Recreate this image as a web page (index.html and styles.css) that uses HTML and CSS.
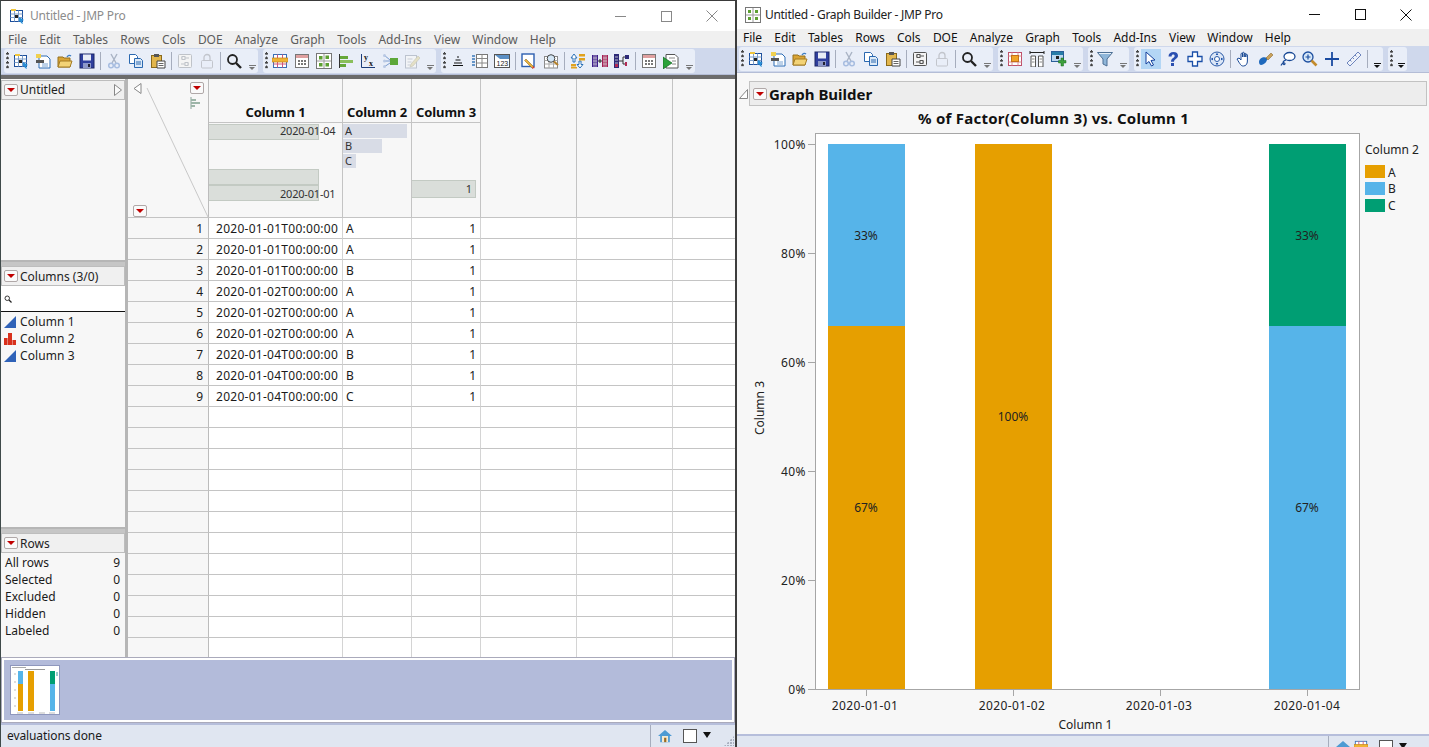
FILE: index.html
```html
<!DOCTYPE html>
<html lang="en">
<head>
<meta charset="utf-8">
<title>JMP Pro</title>
<link rel="stylesheet" href="styles.css">
</head>
<body>
<svg class="defs" width="0" height="0" aria-hidden="true">
  <symbol id="newtable" viewBox="0 0 16 16"><rect x="1.500" y="2.500" width="12" height="11" fill="#fff" stroke="#1c4f9c"/><path d="M1.500 6h12M1.500 9.500h12M5.500 2.500v11M9.500 2.500v11" stroke="#7f9fc9"/><path d="M2 1h5v2H2z" fill="#f0c63c"/><rect x="6" y="7" width="3" height="3" fill="#222"/><path d="M10 9l5 3-2 1 1 3-2-1-1-2-1 1z" fill="#2a8fd6"/></symbol>
  <symbol id="newscript" viewBox="0 0 16 16"><path d="M4 3h8l3 3v9H4z" fill="#fff" stroke="#2c6db5"/><path d="M1 1h5v4H1z" fill="#f0d050"/><path d="M1 7h8v3H1z" fill="#555"/><path d="M7 11h6M7 13h6" stroke="#7aa3d2"/></symbol>
  <symbol id="open" viewBox="0 0 16 16"><path d="M1 4h5l1 1h6v9H1z" fill="#d9a436" stroke="#95701f"/><path d="M3 8h12l-2 6H1z" fill="#f3d377" stroke="#a47d27"/><path d="M10 4c1-2 3-2 4-1" fill="none" stroke="#3d7ec4" stroke-width="1.300"/></symbol>
  <symbol id="save" viewBox="0 0 16 16"><rect x="1" y="1" width="14" height="14" fill="#2f3f9e" stroke="#1d2766"/><rect x="4" y="1.500" width="8" height="6" fill="#e8ecf5"/><rect x="4" y="10" width="8" height="5" fill="#8d98c9"/><rect x="9" y="11" width="2" height="3" fill="#223"/></symbol>
  <symbol id="cut" viewBox="0 0 16 16"><path d="M5 1l5 9M11 1L6 10" stroke="#a9b3c4" stroke-width="1.400"/><circle cx="5" cy="12.500" r="2.300" fill="none" stroke="#a7bde0" stroke-width="1.500"/><circle cx="11" cy="12.500" r="2.300" fill="none" stroke="#a7bde0" stroke-width="1.500"/></symbol>
  <symbol id="copy" viewBox="0 0 16 16"><path d="M1.500 1.500h6l2 2v7h-8z" fill="#fff" stroke="#2a68b0"/><path d="M6.500 5.500h6l2 2v7h-8z" fill="#dce9f7" stroke="#2a68b0"/><path d="M8 9h5M8 11h5" stroke="#2a68b0"/></symbol>
  <symbol id="paste" viewBox="0 0 16 16"><rect x="1.500" y="2.500" width="10" height="12" fill="#e2b64d" stroke="#8a6a1c"/><rect x="4" y="1" width="5" height="3" fill="#555"/><path d="M7 8h8v7H7z" fill="#fff" stroke="#444"/><path d="M8.500 10.500h5M8.500 12.500h5" stroke="#666"/></symbol>
  <symbol id="sliders" viewBox="0 0 16 16"><rect x="1.500" y="1.500" width="13" height="13" rx="1" fill="#f4f4f4" stroke="currentColor"/><path d="M4 5h8M4 11h8" stroke="currentColor"/><rect x="5" y="3.500" width="3" height="3" fill="#f4f4f4" stroke="currentColor"/><rect x="8" y="9.500" width="3" height="3" fill="#f4f4f4" stroke="currentColor"/></symbol>
  <symbol id="lock" viewBox="0 0 16 16"><rect x="2.500" y="7.500" width="11" height="7.500" rx="1" fill="none" stroke="#c2c5cc"/><path d="M5 7.500V4.500a3 3 0 016 0v3" fill="none" stroke="#c2c5cc" stroke-width="1.300"/></symbol>
  <symbol id="search" viewBox="0 0 16 16"><circle cx="6.500" cy="6.500" r="4.500" fill="none" stroke="#222" stroke-width="1.800"/><path d="M10 10l5 5" stroke="#222" stroke-width="2.400"/></symbol>
  <symbol id="colorgrid" viewBox="0 0 16 16"><rect x="1.500" y="1.500" width="13" height="13" fill="#fff" stroke="#3a6fb5"/><path d="M1.500 11h13M5.500 1.500v13M10.500 1.500v13" stroke="#d0567a"/><rect x="0" y="5" width="16" height="4" fill="#f0b432" stroke="#c4811a" stroke-width=".7"/></symbol>
  <symbol id="calc" viewBox="0 0 16 16"><rect x="1.500" y="1.500" width="13" height="13" fill="#fff" stroke="#777"/><rect x="2" y="2" width="12" height="3" fill="#dfa0a0"/><path d="M4 7h2v2H4zM7 7h2v2H7zM10 7h2v2h-2zM4 10h2v2H4zM7 10h2v2H7zM10 10h2v2h-2z" fill="#777"/></symbol>
  <symbol id="quad" viewBox="0 0 16 16"><rect x=".5" y=".5" width="15" height="15" fill="#fff" stroke="#777"/><path d="M8 1v14M1 8h14" stroke="#999"/><path d="M3 3h3.500v3.500H3zM9.500 2.500h3.500V6H9.500zM3 10h3.500v3.500H3zM9.500 10H13v3.500H9.500z" fill="#5da032"/></symbol>
  <symbol id="hbars" viewBox="0 0 16 16"><path d="M1.500 1v14" stroke="#333"/><path d="M2 3h8v3H2z" fill="#66a83a"/><path d="M2 7h13v3H2z" fill="#8abf5c"/><path d="M2 11h6v3H2z" fill="#66a83a"/></symbol>
  <symbol id="nodes" viewBox="0 0 16 16"><rect x="8" y="5" width="8" height="7" fill="#5da83a"/><path d="M2 2l6 5M2 8h6M2 14l6-4" stroke="#7a9ccf"/><circle cx="2.500" cy="2.500" r="1.500" fill="#b9c9e4"/><circle cx="2.500" cy="8" r="1.500" fill="#b9c9e4"/><circle cx="2.500" cy="13.500" r="1.500" fill="#b9c9e4"/></symbol>
  <symbol id="note" viewBox="0 0 16 16"><rect x="1.500" y="2.500" width="11" height="12.500" fill="#f2f4f7" stroke="#bcc3cf"/><path d="M3.500 6h5M3.500 9h4M3.500 12h3" stroke="#c8cdd6"/><path d="M7 11l7-8 2 2-7 8-3 1z" fill="#e4e0c6" stroke="#c5c5b5" stroke-width=".6"/></symbol>
  <symbol id="pyramid" viewBox="0 0 16 16"><path d="M7 4h2M5.500 7h5M4 10h8M3 12.500h10" stroke="#111"/></symbol>
  <symbol id="dashgrid" viewBox="0 0 16 16"><rect x="4.500" y="1.500" width="11" height="13" fill="#fff" stroke="#777"/><path d="M4.500 5.500h11M4.500 10h11M10 1.500v13" stroke="#888"/><path d="M0 3h3M0 6h3M0 9h3M0 12h3" stroke="#3a78b8" stroke-width="1.400"/></symbol>
  <symbol id="pencilbox" viewBox="0 0 16 16"><rect x="1" y="1" width="12" height="12.500" fill="#fff" stroke="#2c5fb0" stroke-width="1.400"/><path d="M5 6l8 8-1.500 1.500-8-8z" fill="#e8b23c" stroke="#7a5a1c" stroke-width=".5"/><path d="M12 13l2 2-3 .5z" fill="#d63a3a"/></symbol>
  <symbol id="tablemag" viewBox="0 0 16 16"><rect x="1.500" y="3.500" width="13" height="11.500" fill="#fff" stroke="#888"/><path d="M1.500 7.500h13M1.500 11h13M6 3.500V15M10.500 3.500V15" stroke="#a8a8a8"/><circle cx="8" cy="5.500" r="3.800" fill="#d3e6f6" stroke="#444"/><path d="M11 8.500l4 3.500" stroke="#b5812a" stroke-width="2"/></symbol>
  <symbol id="sort" viewBox="0 0 16 16"><path d="M4 1L1 5h2v4h2V5h2z" fill="#fff" stroke="#2c72b8"/><path d="M11 15l3-3.500h-2V8h-2v3.500H8z" fill="#fff" stroke="#2c72b8" transform="translate(-1 0)"/><path d="M9 1h6v2.500H9zM9 5h6v2.500H9z" fill="#e0a21f"/><path d="M1 11h5v2.500H1zM1 14h6v1.500H1z" fill="#e0a21f"/></symbol>
  <symbol id="joincols" viewBox="0 0 16 16"><path d="M0 2h6v12H0z" fill="#3e1f8c"/><path d="M10 2h6v12h-6z" fill="#a51e55"/><path d="M1 5h4M1 8h4M1 11h4M11 5h4M11 8h4M11 11h4M2 2v12M4 2v12M12 2v12M14 2v12" stroke="#ddd" stroke-width=".7"/><path d="M6 8h4M8 6v4" stroke="#222"/></symbol>
  <symbol id="tree" viewBox="0 0 16 16"><path d="M0 1h5v14H0z" fill="#2d2a78"/><path d="M1 4h3M1 7h3M1 10h3M1 13h3" stroke="#e0e0e0" stroke-width=".8"/><path d="M1 11h3v3H1z" fill="#b22a55"/><path d="M5 8h4M9 4v7M9 4h2M9 11h2" stroke="#333" fill="none"/><path d="M11 2h4v4h-4z" fill="#2d2a78"/><path d="M11 9h2v4h-2z" fill="#b22a55"/></symbol>
  <symbol id="play" viewBox="0 0 16 16"><path d="M3 1.500h9l3 3V15H3z" fill="#fff" stroke="#555"/><path d="M6 5h6M9 8h4M9 11h4" stroke="#888"/><path d="M0 4l9 6-9 6z" fill="#2aa23a" stroke="#116622" stroke-width=".7"/></symbol>
  <symbol id="chartgrid" viewBox="0 0 16 16"><rect x="1.500" y="1.500" width="13" height="13" fill="#fff" stroke="#c0506a"/><path d="M5 1.500v13M11 1.500v13M1.500 5h13M1.500 11h13" stroke="#d89090"/><rect x="4.500" y="4.500" width="7" height="6" fill="#f0a428" stroke="#c4711a"/></symbol>
  <symbol id="columnsw" viewBox="0 0 16 16"><path d="M1 1.500h14M1 0v3M15 0v3" stroke="#222"/><path d="M2 5h4.500v11H2zM9.500 5H14v11H9.500z" fill="#fff" stroke="#555"/><path d="M3 8h2.500M3 11h2.500M10.500 8H13M10.500 11H13" stroke="#888"/></symbol>
  <symbol id="addtable" viewBox="0 0 16 16"><rect x=".5" y=".5" width="12" height="10" fill="#bcd6ee" stroke="#2b5f99"/><path d="M1 1h11v3H1z" fill="#277da8"/><rect x="5" y="5" width="3" height="3" fill="#222"/><path d="M10 7h2.500v2.500H15V12h-2.500v3H10v-3H7.500V9.500H10z" fill="#3da03c" stroke="#1b6a1f" stroke-width=".5"/></symbol>
  <symbol id="funnel" viewBox="0 0 16 16"><path d="M.500 1.500h15L10 8v7l-4-2V8z" fill="#8fb6d9" stroke="#4d6f94"/><path d="M2 2.500h12" stroke="#e5eef7"/></symbol>
  <symbol id="arrow" viewBox="0 0 16 16"><path d="M3 1v12l3-2.500 2.500 4.500 2-1-2.500-4.500 4-.5z" fill="#fff" stroke="#123f9c"/></symbol>
  <symbol id="help" viewBox="0 0 16 16"><path d="M3.500 5.500C3.500 2.500 5.500 1 8.500 1s4.500 1.700 4.500 3.800c0 3-4 3.200-4 6h-3c0-3.800 3.600-3.800 3.600-5.800 0-2-3-2-3 .5z" fill="#2a4fb0"/><rect x="6" y="12" width="3" height="3" fill="#2a4fb0"/></symbol>
  <symbol id="pad" viewBox="0 0 16 16"><path d="M5.500 1h5v4.500H15v5h-4.500V15h-5v-4.500H1v-5h4.500z" fill="#fff" stroke="#1a4fa8" stroke-width="1.300"/></symbol>
  <symbol id="target" viewBox="0 0 16 16"><circle cx="8" cy="8" r="7" fill="#dbe6f6" stroke="#2b5ba8"/><circle cx="8" cy="8" r="2.500" fill="#fff" stroke="#2b5ba8"/><path d="M8 1.500L6.800 4h2.400zM8 14.500L6.800 12h2.400zM1.500 8L4 6.800v2.400zM14.500 8L12 6.800v2.400z" fill="#1a4fa8"/></symbol>
  <symbol id="hand" viewBox="0 0 16 16"><path d="M1 8l2-1 2 2V3c0-1 1.500-1 1.500 0v3-4c0-1 1.700-1 1.700 0v4-3c0-1 1.600-1 1.600 0v3-2c0-1 1.600-1 1.600 0v6c0 3-1.500 5-4 5H7C5 15 4 13 1 8z" fill="#fff" stroke="#1a4a96"/></symbol>
  <symbol id="brush" viewBox="0 0 16 16"><path d="M1 11c0-4 5-6 8-4 1 3-3 7-6 7-1 0-2-1-2-3z" fill="#1f69bd"/><path d="M8 7l5-5 2 2-5 5z" fill="#caa15a" stroke="#7d5a1e" stroke-width=".5"/></symbol>
  <symbol id="lasso" viewBox="0 0 16 16"><ellipse cx="9.500" cy="5.500" rx="5.500" ry="4" fill="#fff" stroke="#1a4a96" stroke-width="1.300"/><path d="M6 9c-2 .5-3 2-3 3 0 2 2 2 2 .5 0-1-3-1-4 2" fill="none" stroke="#1a4a96" stroke-width="1.200"/></symbol>
  <symbol id="zoom" viewBox="0 0 16 16"><circle cx="6" cy="6" r="5" fill="#d6e7f8" stroke="#1d4fa0" stroke-width="1.300"/><path d="M3.500 6h5M6 3.500v5" stroke="#1d4fa0" stroke-width="1.200"/><path d="M9.500 9.500l5 5" stroke="#c28a2c" stroke-width="2.600"/></symbol>
  <symbol id="cross" viewBox="0 0 16 16"><path d="M8 1v14M1 8h14" stroke="#1a4aa0" stroke-width="1.800"/></symbol>
  <symbol id="ruler" viewBox="0 0 16 16"><path d="M1 12L12 1l3 3L4 15z" fill="#eef2fa" stroke="#6d84bd"/><path d="M4 9l1.500 1.500M6.500 6.500L8 8M9 4l1.500 1.500" stroke="#6d84bd"/></symbol>
  <symbol id="home" viewBox="0 0 16 16"><path d="M8 1L0 8h2.500v7H13.500V8H16z" fill="#4d9bd3"/><path d="M4.500 8h7v7h-7z" fill="#f4ead0"/><rect x="7" y="10" width="2.500" height="5" fill="#9a6a22"/></symbol>
  <symbol id="winicon" viewBox="0 0 16 16"><rect x=".5" y=".5" width="15" height="15" fill="#fff" stroke="#777"/><path d="M8 1v14M1 8h14" stroke="#999"/><path d="M3 3h3v3H3zM10 3h3v3h-3zM3 10h3v3H3zM10 10h3v3h-3z" fill="#5da032"/></symbol>
</svg>

<div class="desktop">
  <section class="window window-left">
    <header class="titlebar">
      <svg class="app-icon"><use href="#newtable"/></svg>
      <span class="title-text">Untitled - JMP Pro</span>
      <div class="win-controls">
        <span class="wc wc-min"></span><span class="wc wc-max"></span>
        <svg class="wc-close" viewBox="0 0 12 12"><path d="M.5.500l11 11M11.500.500l-11 11" stroke="currentColor"/></svg>
      </div>
    </header>
    <nav class="menubar">
      <span>File</span><span>Edit</span><span>Tables</span><span>Rows</span><span>Cols</span><span>DOE</span><span>Analyze</span><span>Graph</span><span>Tools</span><span>Add-Ins</span><span>View</span><span>Window</span><span>Help</span>
    </nav>
    <div class="toolbar">
      <div class="tgroup">
        <i class="grip"></i>
        <svg class="ti"><use href="#newtable"/></svg><svg class="ti"><use href="#newscript"/></svg><svg class="ti"><use href="#open"/></svg><svg class="ti"><use href="#save"/></svg><i class="sep"></i>
        <svg class="ti"><use href="#cut"/></svg><svg class="ti"><use href="#copy"/></svg><svg class="ti"><use href="#paste"/></svg><i class="sep"></i>
        <svg class="ti dim"><use href="#sliders"/></svg><svg class="ti"><use href="#lock"/></svg><i class="sep"></i>
        <svg class="ti"><use href="#search"/></svg><i class="chev"></i>
      </div>
      <div class="tgroup">
        <i class="grip"></i>
        <svg class="ti"><use href="#colorgrid"/></svg><svg class="ti"><use href="#calc"/></svg><svg class="ti"><use href="#quad"/></svg><svg class="ti"><use href="#hbars"/></svg>
        <svg class="ti" viewBox="0 0 16 16"><path d="M1.500 1v13.500H15" fill="none" stroke="#1c3d7a"/><text class="ti-y" x="4" y="7">y</text><text class="ti-y" x="9" y="13">x</text></svg>
        <svg class="ti"><use href="#nodes"/></svg><svg class="ti"><use href="#note"/></svg><i class="chev"></i>
      </div>
      <div class="tgroup">
        <i class="grip"></i>
        <svg class="ti"><use href="#pyramid"/></svg><svg class="ti"><use href="#dashgrid"/></svg>
        <svg class="ti" viewBox="0 0 16 16"><rect x=".5" y="1.500" width="15" height="13" fill="#fff" stroke="#555"/><path d="M1 2h14v4H6z" fill="#5c8fc4"/><text class="ti-n" x="2.500" y="13">123</text></svg><i class="sep"></i>
        <svg class="ti"><use href="#pencilbox"/></svg><svg class="ti"><use href="#tablemag"/></svg><i class="sep"></i>
        <svg class="ti"><use href="#sort"/></svg><svg class="ti"><use href="#joincols"/></svg><svg class="ti"><use href="#tree"/></svg><i class="sep"></i>
        <svg class="ti"><use href="#calc"/></svg><svg class="ti"><use href="#play"/></svg><i class="chev"></i>
      </div>
    </div>
    <div class="darkbar"></div>

    <div class="workspace">
      <aside class="sidebar">
        <div class="panel panel-untitled">
          <div class="panel-head"><span class="redbtn"></span><span class="panel-name">Untitled</span><svg class="panel-tri" viewBox="0 0 8 12"><path d="M.5.500l7 5.500-7 5.500z" fill="#fafafa" stroke="#888"/></svg></div>
        </div>
        <div class="splitter"></div>
        <div class="panel panel-columns">
          <div class="panel-head"><span class="redbtn"></span><span class="panel-name">Columns (3/0)</span></div>
          <div class="col-search"><svg class="mini-search"><use href="#search"/></svg></div>
          <ul class="col-list">
            <li><svg class="col-ico" viewBox="0 0 12 12"><path d="M0 12L12 0v12z" fill="#2f62b8"/></svg>Column 1</li>
            <li><svg class="col-ico" viewBox="0 0 12 12"><path d="M0 5h3.600v7H0zM4 0h4v12H4zM8.400 7H12v5H8.400z" fill="#d8301c"/></svg>Column 2</li>
            <li><svg class="col-ico" viewBox="0 0 12 12"><path d="M0 12L12 0v12z" fill="#2f62b8"/></svg>Column 3</li>
          </ul>
        </div>
        <div class="splitter"></div>
        <div class="panel panel-rows">
          <div class="panel-head"><span class="redbtn"></span><span class="panel-name">Rows</span></div>
          <dl class="row-stats">
            <div><dt>All rows</dt><dd>9</dd></div>
            <div><dt>Selected</dt><dd>0</dd></div>
            <div><dt>Excluded</dt><dd>0</dd></div>
            <div><dt>Hidden</dt><dd>0</dd></div>
            <div><dt>Labeled</dt><dd>0</dd></div>
          </dl>
        </div>
      </aside>

      <div class="sheet">
        <div class="sheet-head">
          <div class="corner">
            <svg class="corner-lines" viewBox="0 0 81 138"><path d="M19 9l61 129" stroke="#c8c8c8" fill="none"/><path d="M13 4.500L6 9.500l7 5z" fill="#fff" stroke="#888"/></svg>
            <span class="redbtn corner-top"></span>
            <svg class="corner-list" viewBox="0 0 11 12"><path d="M1 0v12" stroke="#8aa39a"/><path d="M1 2h5v2H1zM1 5h9v2H1zM1 8h4v2H1z" fill="#9db5a8"/></svg>
            <span class="redbtn corner-bottom"></span>
          </div>
          <div class="hcol">
            <div class="hname">Column 1</div>
            <div class="hist hist-date">
              <div class="hbar-row first"><i class="hbar"></i><span>2020-01-04</span></div>
              <div class="hbar-gap"></div>
              <div class="hbar-row"><i class="hbar"></i></div>
              <div class="hbar-row"><i class="hbar"></i><span>2020-01-01</span></div>
            </div>
          </div>
          <div class="hcol">
            <div class="hname">Column 2</div>
            <div class="hist hist-cat">
              <div class="cat-row"><i class="cbar cbar-a"></i><span>A</span></div>
              <div class="cat-row"><i class="cbar cbar-b"></i><span>B</span></div>
              <div class="cat-row"><i class="cbar cbar-c"></i><span>C</span></div>
            </div>
          </div>
          <div class="hcol">
            <div class="hname">Column 3</div>
            <div class="hist hist-num"><div class="num-bar">1</div></div>
          </div>
          <div class="hcol"></div>
          <div class="hcol"></div>
          <div class="hcol hcol-last"></div>
        </div>
        <div class="rows">
          <div class="row"><b>1</b><i>2020-01-01T00:00:00</i><i>A</i><i class="n">1</i><i></i><i></i><i></i></div>
          <div class="row"><b>2</b><i>2020-01-01T00:00:00</i><i>A</i><i class="n">1</i><i></i><i></i><i></i></div>
          <div class="row"><b>3</b><i>2020-01-01T00:00:00</i><i>B</i><i class="n">1</i><i></i><i></i><i></i></div>
          <div class="row"><b>4</b><i>2020-01-02T00:00:00</i><i>A</i><i class="n">1</i><i></i><i></i><i></i></div>
          <div class="row"><b>5</b><i>2020-01-02T00:00:00</i><i>A</i><i class="n">1</i><i></i><i></i><i></i></div>
          <div class="row"><b>6</b><i>2020-01-02T00:00:00</i><i>A</i><i class="n">1</i><i></i><i></i><i></i></div>
          <div class="row"><b>7</b><i>2020-01-04T00:00:00</i><i>B</i><i class="n">1</i><i></i><i></i><i></i></div>
          <div class="row"><b>8</b><i>2020-01-04T00:00:00</i><i>B</i><i class="n">1</i><i></i><i></i><i></i></div>
          <div class="row"><b>9</b><i>2020-01-04T00:00:00</i><i>C</i><i class="n">1</i><i></i><i></i><i></i></div>
          <div class="row"><b></b><i></i><i></i><i></i><i></i><i></i><i></i></div>
          <div class="row"><b></b><i></i><i></i><i></i><i></i><i></i><i></i></div>
          <div class="row"><b></b><i></i><i></i><i></i><i></i><i></i><i></i></div>
          <div class="row"><b></b><i></i><i></i><i></i><i></i><i></i><i></i></div>
          <div class="row"><b></b><i></i><i></i><i></i><i></i><i></i><i></i></div>
          <div class="row"><b></b><i></i><i></i><i></i><i></i><i></i><i></i></div>
          <div class="row"><b></b><i></i><i></i><i></i><i></i><i></i><i></i></div>
          <div class="row"><b></b><i></i><i></i><i></i><i></i><i></i><i></i></div>
          <div class="row"><b></b><i></i><i></i><i></i><i></i><i></i><i></i></div>
          <div class="row"><b></b><i></i><i></i><i></i><i></i><i></i><i></i></div>
          <div class="row"><b></b><i></i><i></i><i></i><i></i><i></i><i></i></div>
          <div class="row"><b></b><i></i><i></i><i></i><i></i><i></i><i></i></div>
        </div>
      </div>
    </div>

    <div class="thumbs">
      <div class="thumb">
        <svg viewBox="0 0 48 48" width="48" height="48"><rect width="48" height="48" fill="#fff"/><rect x="1" y="1" width="14" height="1" fill="#aaa"/><rect x="14" y="3" width="20" height="1" fill="#999"/><rect x="7" y="5" width="5" height="13" fill="#56b4e9"/><rect x="7" y="18" width="5" height="27" fill="#e69f00"/><rect x="17" y="5" width="6" height="40" fill="#e69f00"/><rect x="39" y="5" width="5" height="13" fill="#009e73"/><rect x="39" y="18" width="5" height="27" fill="#56b4e9"/><rect x="45" y="6" width="2" height="4" fill="#9cc"/><path d="M3 8h2M3 16h2M3 24h2M3 32h2M3 40h2M6 47h6M17 47h6M28 47h6M38 47h6" stroke="#bbb"/></svg>
      </div>
    </div>
    <footer class="statusbar">
      <span class="status-text">evaluations done</span>
      <div class="status-tools">
        <svg class="st-home"><use href="#home"/></svg>
        <span class="st-box"></span>
        <i class="st-tri"></i>
      </div>
    </footer>
  </section>

  <section class="window window-right">
    <header class="titlebar">
      <svg class="app-icon"><use href="#winicon"/></svg>
      <span class="title-text">Untitled - Graph Builder - JMP Pro</span>
      <div class="win-controls">
        <span class="wc wc-min"></span><span class="wc wc-max"></span>
        <svg class="wc-close" viewBox="0 0 12 12"><path d="M.5.500l11 11M11.500.500l-11 11" stroke="currentColor"/></svg>
      </div>
    </header>
    <nav class="menubar">
      <span>File</span><span>Edit</span><span>Tables</span><span>Rows</span><span>Cols</span><span>DOE</span><span>Analyze</span><span>Graph</span><span>Tools</span><span>Add-Ins</span><span>View</span><span>Window</span><span>Help</span>
    </nav>
    <div class="toolbar">
      <div class="tgroup">
        <i class="grip"></i>
        <svg class="ti"><use href="#newtable"/></svg><svg class="ti"><use href="#newscript"/></svg><svg class="ti"><use href="#open"/></svg><svg class="ti"><use href="#save"/></svg><i class="sep"></i>
        <svg class="ti"><use href="#cut"/></svg><svg class="ti"><use href="#copy"/></svg><svg class="ti"><use href="#paste"/></svg><i class="sep"></i>
        <svg class="ti strong"><use href="#sliders"/></svg><svg class="ti"><use href="#lock"/></svg><i class="sep"></i>
        <svg class="ti"><use href="#search"/></svg><i class="chev"></i>
      </div>
      <div class="tgroup">
        <i class="grip"></i>
        <svg class="ti"><use href="#chartgrid"/></svg><svg class="ti"><use href="#columnsw"/></svg><svg class="ti"><use href="#addtable"/></svg><i class="chev"></i>
      </div>
      <div class="tgroup">
        <i class="grip"></i>
        <svg class="ti"><use href="#funnel"/></svg><i class="chev"></i>
      </div>
      <div class="tgroup">
        <i class="grip"></i>
        <span class="ti-active"><svg class="ti-in"><use href="#arrow"/></svg></span><svg class="ti"><use href="#help"/></svg><svg class="ti"><use href="#pad"/></svg><svg class="ti"><use href="#target"/></svg><i class="sep"></i>
        <svg class="ti"><use href="#hand"/></svg><svg class="ti"><use href="#brush"/></svg><svg class="ti"><use href="#lasso"/></svg><svg class="ti"><use href="#zoom"/></svg><svg class="ti"><use href="#cross"/></svg><svg class="ti"><use href="#ruler"/></svg><i class="sep"></i>
        <i class="chev chev-dark"></i>
      </div>
      <div class="tgroup">
        <i class="grip"></i>
        <i class="chev chev-dark"></i>
      </div>
    </div>
    <div class="report">
      <div class="outline">
        <svg class="outline-tri" viewBox="0 0 9 10"><path d="M8.500.500v9h-8z" fill="#fff" stroke="#888"/></svg>
        <div class="outline-head"><span class="redbtn"></span><span class="outline-name">Graph Builder</span></div>
      </div>
      <svg class="chart" viewBox="737 106 692 628" role="img">
        <text class="c-title" x="1053.500" y="124" text-anchor="middle">% of Factor(Column 3) vs. Column 1</text>
        <rect x="815.500" y="133.500" width="544" height="556" fill="#fff" stroke="#a6a6a6"/>
        <g stroke="#a6a6a6">
          <path d="M808 144.500h7M808 253.500h7M808 362.500h7M808 471.500h7M808 580.500h7M808 689.500h7"/>
          <path d="M866.500 690v6M1013.500 690v6M1160.500 690v6M1307.500 690v6"/>
        </g>
        <rect x="828" y="144" width="77" height="182" fill="#56b4e9"/>
        <rect x="828" y="326" width="77" height="363" fill="#e69f00"/>
        <rect x="975" y="144" width="77" height="545" fill="#e69f00"/>
        <rect x="1269" y="144" width="77" height="182" fill="#009e73"/>
        <rect x="1269" y="326" width="77" height="363" fill="#56b4e9"/>
        <g class="c-text c-wide" text-anchor="end">
          <text x="806" y="149">100%</text><text x="806" y="258">80%</text><text x="806" y="367">60%</text><text x="806" y="476">40%</text><text x="806" y="585">20%</text><text x="806" y="694">0%</text>
        </g>
        <g class="c-text" text-anchor="middle">
          <text x="866" y="240">33%</text><text x="866" y="512">67%</text><text x="1013" y="421">100%</text><text x="1307" y="240">33%</text><text x="1307" y="512">67%</text>
          <text x="1085.500" y="729">Column 1</text>
          <text x="0" y="0" transform="translate(764 408) rotate(-90)">Column 3</text>
        </g>
        <g class="c-text c-wide" text-anchor="middle">
          <text x="865" y="710">2020-01-01</text><text x="1012" y="710">2020-01-02</text><text x="1159" y="710">2020-01-03</text><text x="1307" y="710">2020-01-04</text>
        </g>
        <g class="c-text">
          <text x="1365" y="154">Column 2</text>
          <text x="1388" y="177">A</text><text x="1388" y="193">B</text><text x="1388" y="210">C</text>
        </g>
        <rect x="1365" y="165" width="20" height="13" fill="#e69f00"/>
        <rect x="1365" y="182" width="20" height="13" fill="#56b4e9"/>
        <rect x="1365" y="199" width="20" height="13" fill="#009e73"/>
      </svg>
    </div>
    <footer class="statusbar">
      <div class="status-tools">
        <svg class="st-home"><use href="#home"/></svg>
        <svg class="st-table"><use href="#colorgrid"/></svg>
        <span class="st-box"></span>
        <i class="st-tri"></i>
      </div>
    </footer>
  </section>
</div>
</body>
</html>
```

FILE: styles.css
```css
* { box-sizing: border-box; }
html, body { margin: 0; padding: 0; height: 100%; overflow: hidden; }
body { font-family: "Noto Sans", "Open Sans", sans-serif; font-size: 12px; color: #1a1a1a; background: #333; }
.defs { position: absolute; }
i { font-style: normal; }

.desktop { display: flex; width: 1429px; height: 747px; }
.window { display: flex; flex-direction: column; background: #fff; overflow: hidden; }
.window-left { width: 737px; border-left: 1px solid #3f4a4a; border-top: 1px solid #3a3a3a; border-right: 2px solid #3d3d3d; }
.window-right { width: 692px; }

.titlebar { display: flex; align-items: center; background: #fff; flex: none; }
.window-left .titlebar { height: 30px; padding: 0 0 0 8px; color: #8c8c8c; }
.window-right .titlebar { height: 29px; padding: 0 0 0 8px; color: #222; }
.app-icon { width: 16px; height: 16px; flex: none; margin-right: 5px; }
.title-text { letter-spacing: -.3px; white-space: nowrap; }
.window-left .title-text { letter-spacing: -.2px; padding-bottom: 1px; }
.window-right .title-text { margin-left: -1px; }
.win-controls { margin-left: auto; display: flex; align-items: center; color: #888; }
.window-right .win-controls { color: #111; }
.wc { display: block; }
.wc-min { width: 11px; height: 1px; background: currentColor; margin-right: 35px; }
.wc-max { width: 11px; height: 11px; border: 1px solid currentColor; margin-right: 34px; }
.wc-close { width: 12px; height: 12px; margin-right: 17px; }

.menubar { display: flex; height: 17px; background: #f0f0f0; flex: none; align-items: center; line-height: 17px; padding-left: 7px; gap: 12.3px; letter-spacing: -.05px; white-space: nowrap; }
.window-left .menubar { color: #5c5c5c; }
.window-right .menubar { color: #111; padding-left: 6px; }

.toolbar { display: flex; height: 27px; flex: none; background: #cfd8ec; padding: 1px 0 2px 3px; gap: 5px; border-bottom: 1px solid #b4bdd6; overflow: hidden; }
.window-right .toolbar { padding-left: 2px; }
.tgroup { display: flex; align-items: center; background: #e9eef8; border-radius: 3px; height: 24px; }
.grip { width: 6px; height: 18px; flex: none; background-image: radial-gradient(circle at 3.500px 1.500px, #444 1.200px, transparent 1.400px); background-size: 6px 4.500px; background-repeat: repeat-y; }
.ti { width: 16px; height: 16px; margin: 0 3px; flex: none; display: block; }
.ti-in { width: 16px; height: 16px; display: block; }
.ti-y { font-family: "Liberation Serif", serif; font-size: 8px; font-weight: 700; fill: #111; }
.ti-n { font-family: "Liberation Sans", sans-serif; font-size: 7px; fill: #222; }
.dim { color: #bfc3c9; }
.strong { color: #555; }
.sep { width: 1px; height: 18px; background: #a6adbd; margin: 0 2px; flex: none; }
.chev { width: 13px; height: 24px; flex: none; position: relative; }
.chev::before { content: ""; position: absolute; left: 4px; top: 16px; width: 7px; height: 1px; background: #777; }
.chev::after { content: ""; position: absolute; left: 4px; top: 18px; border: 3.500px solid transparent; border-top-color: #777; border-bottom: 0; }
.chev-dark::before { background: #111; }
.chev-dark::after { border-top-color: #111; }
.ti-active { background: #b3d6f5; display: flex; width: 20px; height: 20px; margin: 0 1px; align-items: center; justify-content: center; flex: none; }

.darkbar { height: 4px; background: #6c6c6c; flex: none; }

.workspace { display: flex; flex: 1; min-height: 0; background: #fff; }
.sidebar { width: 127px; flex: none; display: flex; flex-direction: column; background: #f7f7f7; border-right: 3px solid #b6b6b6; }
.panel { display: flex; flex-direction: column; }
.panel-untitled { height: 181px; }
.panel-columns { height: 261px; }
.panel-rows { flex: 1; }
.splitter { height: 6px; background: #c6c6c6; border-top: 2px solid #b6b6b6; flex: none; }
.panel-head { display: flex; align-items: center; height: 20px; background: #f0f0f0; border: 1px solid #bdbdbd; flex: none; padding-left: 2px; gap: 2px; margin-top: 1px; }
.panel-columns .panel-head, .panel-rows .panel-head { margin-top: 0; }
.panel-name { color: #222; white-space: nowrap; }
.panel-untitled .panel-name { margin-bottom: 2px; }
.panel-tri { margin-left: auto; margin-right: 2px; width: 8px; height: 12px; flex: none; }
.redbtn { display: inline-block; position: relative; width: 14px; height: 12px; flex: none; background: #fafafa; border: 1px solid #b0a8a8; border-radius: 2px; }
.redbtn::after { content: ""; position: absolute; left: 2px; top: 3px; border: 4px solid transparent; border-top: 4px solid #c00000; border-bottom: 0; }

.col-search { height: 26px; background: #fff; border-bottom: 1px solid #111; display: flex; align-items: center; padding-left: 3px; }
.mini-search { width: 8px; height: 8px; }
.col-list { list-style: none; margin: 0; padding: 0; }
.col-list li { height: 17px; display: flex; align-items: center; padding-left: 3px; white-space: nowrap; letter-spacing: .1px; color: #222; }
.col-list li:first-child { margin-top: 1px; }
.col-ico { width: 12px; height: 12px; margin-right: 4px; flex: none; }
.row-stats { margin: 0; padding: 1px 5px 0 4px; }
.row-stats > div { display: flex; justify-content: space-between; height: 17px; line-height: 17px; }
.row-stats dt, .row-stats dd { margin: 0; }

.sheet { flex: 1; min-width: 0; display: flex; flex-direction: column; background: #fff; }
.sheet-head, .row { display: grid; grid-template-columns: 81px 134px 69px 69px 96px 96px 1fr; }
.sheet-head { height: 139px; background: #f7f7f7; border-bottom: 1px solid #c4c4c4; flex: none; }
.corner { position: relative; border-right: 1px solid #bcbcbc; }
.corner-lines { position: absolute; left: 0; top: 0; width: 81px; height: 138px; }
.corner-top { position: absolute; left: 62px; top: 3px; }
.corner-list { position: absolute; left: 62px; top: 18px; width: 11px; height: 12px; }
.corner-bottom { position: absolute; left: 5px; top: 126px; }
.hcol { border-right: 1px solid #c4c4c4; display: flex; flex-direction: column; }
.hcol-last { border-right: 0; }
.hname { height: 44px; flex: none; border-bottom: 1px solid #c4c4c4; display: flex; align-items: flex-end; justify-content: center; font-weight: 700; font-size: 13px; color: #111; letter-spacing: -.1px; line-height: 17px; padding-bottom: 1px; white-space: nowrap; }
.hist { flex: 1; position: relative; font-size: 11px; color: #333; }
.hbar-row { display: flex; height: 16px; align-items: center; }
.hbar-row.first { margin-top: 1px; }
.hbar-row.first span { margin-bottom: 4px; }
.hbar-gap { height: 29px; }
.hbar { display: block; width: 110px; height: 16px; flex: none; background: #dadeda; border: 1px solid #c3cac3; border-left: 0; }
.hbar-row span { margin-left: -39px; width: 65px; white-space: nowrap; letter-spacing: -.2px; }
.cat-row { height: 15px; display: flex; align-items: center; position: relative; }
.cat-row span { position: relative; margin: 0 0 2px 2px; line-height: 15px; }
.cbar { position: absolute; left: 0; top: 0; height: 14px; background: #d8dce6; }
.cbar-a { width: 64px; }
.cbar-b { width: 39px; }
.cbar-c { width: 13px; }
.hist-cat { padding-top: 1px; }
.num-bar { position: absolute; left: 0; top: 57px; width: 64px; height: 18px; background: #dadeda; border: 1px solid #c3cac3; border-left: 0; text-align: right; padding-right: 3px; line-height: 16px; }

.rows { flex: 1; min-height: 0; overflow: hidden; }
.row { height: 21px; grid-template-rows: 21px; }
.row b, .row i { height: 21px; line-height: 21px; padding-top: 0; border-right: 1px solid #d4d4d4; border-bottom: 1px solid #c4c4c4; display: block; font-weight: 400; color: #1a1a1a; white-space: nowrap; overflow: hidden; }
.row b { background: #f7f7f7; text-align: right; padding-right: 5px; border-right-color: #bcbcbc; }
.row i { padding-left: 3px; }
.row i:first-of-type { padding-left: 7px; letter-spacing: .27px; }
.row i.n { text-align: right; padding-right: 4px; }
.row i:last-child { border-right: 0; }

.thumbs { height: 66px; flex: none; background: #b3bbda; border: 1px solid #aab; outline: 2px solid #fff; outline-offset: -3px; padding: 7px 0 0 8px; }
.thumb { width: 50px; height: 50px; background: #fff; border: 1px solid #8f97bd; }
.thumb svg { display: block; }

.statusbar { background: #e0e6f1; border-top: 2px solid #b6bedb; flex: none; display: flex; align-items: center; position: relative; overflow: hidden; }
.window-left .statusbar { height: 24px; }
.window-left .statusbar::after { content: ""; position: absolute; right: 1px; bottom: 1px; width: 10px; height: 10px; background-image: radial-gradient(circle at 1px 1px, #a9b0c0 1px, transparent 1.100px); background-size: 3px 3px; clip-path: polygon(100% 0, 100% 100%, 0 100%); }
.window-right .statusbar { height: 13px; align-items: flex-start; }
.status-text { padding: 0 0 2px 6px; letter-spacing: -.1px; }
.status-tools { margin-left: auto; display: flex; align-items: center; border-left: 1px solid #a6adbd; height: 22px; padding-left: 4px; }
.window-left .status-tools { margin-right: 24px; }
.window-right .status-tools { margin-right: 22px; margin-top: 0; }
.st-home { width: 14px; height: 14px; margin: 0 2px 0 3px; }
.st-table { width: 14px; height: 14px; margin: 0 2px; }
.st-box { width: 14px; height: 14px; background: #fff; border: 1px solid #555; margin-left: 9px; }
.st-tri { width: 0; height: 0; border: 4px solid transparent; border-top: 6px solid #111; border-bottom: 0; margin: 0 0 2px 6px; }

.report { flex: 1; min-height: 0; background: #f7f7f7; padding-top: 8px; display: flex; flex-direction: column; }
.outline { display: flex; align-items: center; height: 25px; flex: none; padding-left: 2px; gap: 1px; }
.outline-tri { width: 9px; height: 10px; flex: none; }
.outline-head { flex: 1; height: 25px; background: #ededed; border: 1px solid #c2c2c2; margin-right: 2px; display: flex; align-items: center; padding-left: 3px; gap: 2px; }
.outline-name { font-weight: 700; font-size: 15px; color: #111; }
.chart { display: block; width: 692px; height: 628px; flex: none; }
.c-title { font-weight: 700; font-size: 15px; letter-spacing: .25px; fill: #111; }
.c-text text { font-size: 12px; fill: #222; }
.c-wide text { letter-spacing: .4px; }
```
